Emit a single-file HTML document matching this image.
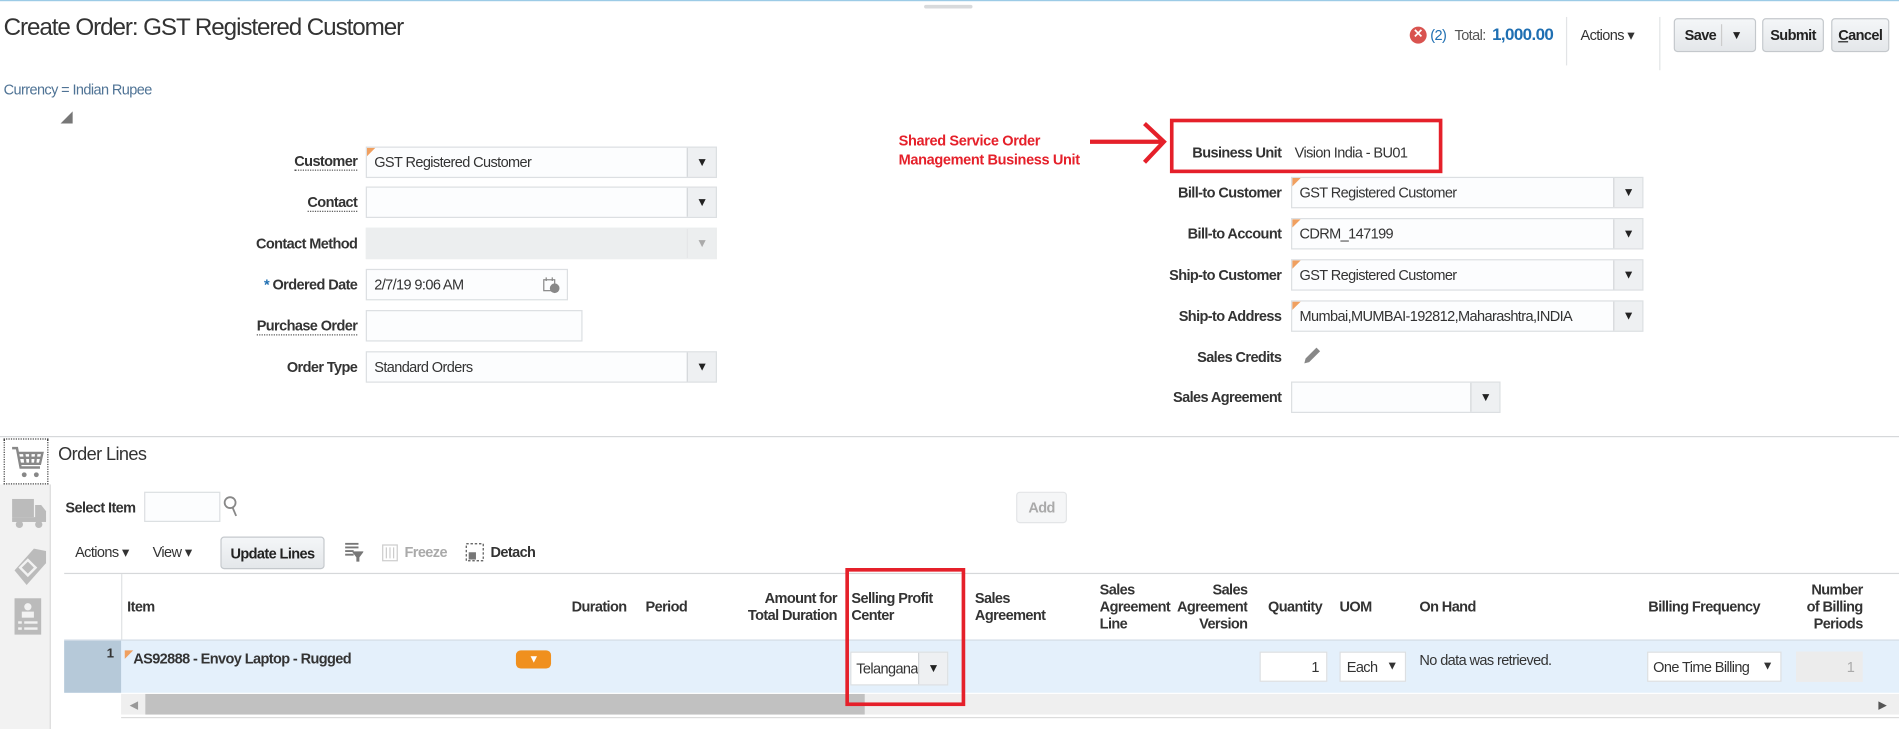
<!DOCTYPE html>
<html><head><meta charset="utf-8"><style>
*{box-sizing:border-box;margin:0;padding:0}
body{width:1899px;height:729px;overflow:hidden;background:#fff;font-family:"Liberation Sans",Arial,sans-serif;color:#333}
#w{position:absolute;left:0;top:0;width:1568px;height:602px;transform:scale(1.2111);transform-origin:0 0;letter-spacing:-0.5px}
.a{position:absolute;white-space:nowrap}
.lbl{position:absolute;font-size:12px;font-weight:bold;color:#333;text-align:right;white-space:nowrap}
.inp{position:absolute;border:1px solid #dcdfe2;background:#fcfdfe;font-size:12px;color:#333;padding:0 6px;display:flex;align-items:center;white-space:nowrap;overflow:hidden}
.dd{position:absolute;top:-1px;right:-1px;bottom:-1px;width:25px;background:#eef0f2;border:1px solid #d4d7da;display:flex;align-items:center;justify-content:center;font-size:10px;color:#222}
.mark{position:absolute;left:0;top:0;width:0;height:0;border-top:7px solid #f0a060;border-right:7px solid transparent}
.btn{position:absolute;border:1px solid #c4c8cc;border-radius:3px;background:linear-gradient(#f4f6f8,#e4e7ea);font-size:12px;font-weight:bold;display:flex;align-items:center;justify-content:center;color:#222}
.th{position:absolute;font-size:12px;font-weight:bold;color:#333;line-height:14px;white-space:nowrap}
.ul{border-bottom:1px dotted #555}
</style></head><body><div id="w">
<div class="a" style="left:0;top:0;width:1568px;height:1px;background:#9ccbe6"></div>
<div class="a" style="left:763px;top:4px;width:40px;height:3px;background:#d8dadc;border-radius:2px"></div>
<div class="a" style="left:3px;top:12px;font-size:20px;color:#333;letter-spacing:-0.9px">Create Order: GST Registered Customer</div>

<div class="a" style="left:1164px;top:22px;width:14px;height:14px;border-radius:7px;background:#d9534f;color:#fff;font-size:10px;font-weight:bold;text-align:center;line-height:14px;letter-spacing:0">✕</div>
<div class="a" style="left:1181px;top:22px;font-size:12px;color:#1f6fb2">(2)</div>
<div class="a" style="left:1201px;top:22px;font-size:12px;color:#555">Total:</div>
<div class="a" style="left:1232px;top:20px;font-size:14px;font-weight:bold;color:#1f6fb2">1,000.00</div>
<div class="a" style="left:1293px;top:14px;width:1px;height:40px;background:#e2e4e6"></div>
<div class="a" style="left:1305px;top:22px;font-size:12px;color:#333">Actions ▾</div>
<div class="a" style="left:1370px;top:14px;width:1px;height:44px;background:#e2e4e6"></div>
<div class="btn" style="left:1382px;top:15px;width:68px;height:28px;justify-content:flex-start;padding-left:8px">Save<span style="position:absolute;left:38px;top:4px;bottom:4px;width:1px;background:#ccc"></span><span style="position:absolute;left:46px;font-size:10px">▼</span></div>
<div class="btn" style="left:1455px;top:15px;width:51px;height:28px">Submit</div>
<div class="btn" style="left:1512px;top:15px;width:48px;height:28px"><u>C</u>ancel</div>

<div class="a" style="left:3px;top:67px;font-size:12px;color:#4f7395">Currency = Indian Rupee</div>
<div class="a" style="left:50px;top:92px;width:0;height:0;border-bottom:10px solid #777;border-left:10px solid transparent"></div>

<div class="lbl" style="right:1273px;top:126px"><span class="ul">Customer</span></div>
<div class="inp" style="left:302px;top:121px;width:290px;height:26px"><div class="mark"></div>GST Registered Customer<div class="dd">▼</div></div>
<div class="lbl" style="right:1273px;top:160px"><span class="ul">Contact</span></div>
<div class="inp" style="left:302px;top:154px;width:290px;height:26px"><div class="dd">▼</div></div>
<div class="lbl" style="right:1273px;top:194px">Contact Method</div>
<div class="inp" style="left:302px;top:188px;width:290px;height:26px;background:#eceeef;border-color:#eceeef"><div class="dd" style="background:#eceeef;border-color:#e4e6e8;color:#aaa">▼</div></div>
<div class="lbl" style="right:1273px;top:228px"><span style="color:#1f6fb2">*</span> Ordered Date</div>
<div class="inp" style="left:302px;top:222px;width:167px;height:26px">2/7/19 9:06 AM<svg style="position:absolute;right:6px;top:5px" width="14" height="15"><rect x="1" y="3" width="9" height="9" fill="none" stroke="#888"/><path d="M3 1V4M8 1V4" stroke="#888"/><circle cx="10" cy="10" r="4" fill="#888"/></svg></div>
<div class="lbl" style="right:1273px;top:262px"><span class="ul">Purchase Order</span></div>
<div class="inp" style="left:302px;top:256px;width:179px;height:26px"></div>
<div class="lbl" style="right:1273px;top:296px">Order Type</div>
<div class="inp" style="left:302px;top:290px;width:290px;height:26px">Standard Orders<div class="dd">▼</div></div>

<div class="a" style="left:742px;top:108px;font-size:12px;font-weight:bold;color:#e5202a;line-height:16px;letter-spacing:-0.3px">Shared Service Order<br>Management Business Unit</div>
<svg class="a" style="left:895px;top:100px" width="72" height="38"><path d="M5 17 L66 17 M50 2 L66 17 L50 34" stroke="#e5202a" stroke-width="3.5" fill="none"/></svg>
<div class="a" style="left:966px;top:98px;width:225px;height:45px;border:3px solid #e5202a"></div>

<div class="lbl" style="right:510px;top:119px">Business Unit</div>
<div class="a" style="left:1069px;top:119px;font-size:12px">Vision India - BU01</div>
<div class="lbl" style="right:510px;top:152px">Bill-to Customer</div>
<div class="inp" style="left:1066px;top:146px;width:291px;height:26px"><div class="mark"></div>GST Registered Customer<div class="dd">▼</div></div>
<div class="lbl" style="right:510px;top:186px">Bill-to Account</div>
<div class="inp" style="left:1066px;top:180px;width:291px;height:26px"><div class="mark"></div>CDRM_147199<div class="dd">▼</div></div>
<div class="lbl" style="right:510px;top:220px">Ship-to Customer</div>
<div class="inp" style="left:1066px;top:214px;width:291px;height:26px"><div class="mark"></div>GST Registered Customer<div class="dd">▼</div></div>
<div class="lbl" style="right:510px;top:254px">Ship-to Address</div>
<div class="inp" style="left:1066px;top:248px;width:291px;height:26px"><div class="mark"></div>Mumbai,MUMBAI-192812,Maharashtra,INDIA<div class="dd">▼</div></div>
<div class="lbl" style="right:510px;top:288px">Sales Credits</div>
<svg class="a" style="left:1074px;top:285px" width="18" height="18"><path d="M3 15 L4 11 L13 2 L16 5 L7 14 Z" fill="#888"/></svg>
<div class="lbl" style="right:510px;top:321px">Sales Agreement</div>
<div class="inp" style="left:1066px;top:315px;width:173px;height:26px"><div class="dd">▼</div></div>

<div class="a" style="left:0;top:360px;width:1568px;height:1px;background:#d6d8da"></div>
<div class="a" style="left:0;top:400px;width:42px;height:202px;background:#f2f2f2;border-right:1px solid #dcdcdc"></div>
<div class="a" style="left:3px;top:362px;width:37px;height:38px;border:1px dotted #444;background:#fff"></div>
<svg class="a" style="left:9px;top:367px" width="28" height="30"><path d="M1 3 L5 3 L8 19 L24 19 M6 7 L26 7 L24 16 L8 16 M11 7 L12 16 M16 7 L16 16 M21 7 L20 16 M7 11 L25 11" stroke="#888" stroke-width="2" fill="none"/><circle cx="11" cy="25" r="2" fill="#888"/><circle cx="21" cy="25" r="2" fill="#888"/></svg>
<svg class="a" style="left:9px;top:410px" width="30" height="28"><rect x="1" y="2" width="18" height="15" fill="#bbb"/><path d="M20 7 L25 7 L29 12 L29 20 L20 20 Z" fill="#bbb"/><rect x="1" y="17" width="28" height="4" fill="#bbb"/><circle cx="7" cy="23" r="3" fill="#bbb"/><circle cx="23" cy="23" r="3" fill="#bbb"/></svg>
<svg class="a" style="left:8px;top:449px" width="32" height="36"><path d="M4 22 L20 4 L30 6 L30 16 L14 34 Z" fill="#bbb"/><rect x="11" y="15" width="9" height="9" transform="rotate(45 15 19)" fill="none" stroke="#f2f2f2" stroke-width="2"/></svg>
<svg class="a" style="left:11px;top:493px" width="24" height="32"><rect x="1" y="1" width="22" height="30" fill="#bbb"/><circle cx="12" cy="8" r="3" fill="#f2f2f2"/><rect x="7" y="12" width="10" height="5" fill="#f2f2f2"/><rect x="4" y="20" width="3" height="2" fill="#f2f2f2"/><rect x="9" y="20" width="11" height="2" fill="#f2f2f2"/><rect x="4" y="25" width="3" height="2" fill="#f2f2f2"/><rect x="9" y="25" width="11" height="2" fill="#f2f2f2"/></svg>

<div class="a" style="left:48px;top:367px;font-size:15px;color:#333">Order Lines</div>
<div class="lbl" style="left:54px;top:412px">Select Item</div>
<div class="inp" style="left:119px;top:406px;width:63px;height:25px"></div>
<svg class="a" style="left:184px;top:409px" width="14" height="20"><circle cx="6" cy="6" r="4.5" stroke="#888" stroke-width="1.5" fill="none"/><path d="M8 10 L11 17" stroke="#888" stroke-width="1.5"/></svg>
<div class="btn" style="left:839px;top:406px;width:42px;height:26px;color:#aaa;background:#f5f6f7;border-color:#e3e5e7">Add</div>

<div class="a" style="left:62px;top:449px;font-size:12px">Actions ▾</div>
<div class="a" style="left:126px;top:449px;font-size:12px">View ▾</div>
<div class="btn" style="left:182px;top:443px;width:86px;height:27px">Update Lines</div>
<svg class="a" style="left:284px;top:448px" width="16" height="16"><path d="M1 1 H12 M1 4 H12 M1 7 H8 M1 10 H8 M8 8 L15 8 L12 12 L12 15 L11 15 L11 12 Z" stroke="#777" stroke-width="1.5" fill="#777"/></svg>
<svg class="a" style="left:315px;top:449px" width="14" height="15"><rect x="1" y="1" width="12" height="13" fill="none" stroke="#ccc"/><path d="M4 3V12M7 3V12M10 3V12" stroke="#ccc"/></svg>
<div class="a" style="left:334px;top:449px;font-size:12px;font-weight:bold;color:#aaa">Freeze</div>
<svg class="a" style="left:384px;top:448px" width="16" height="16"><rect x="1" y="1" width="14" height="14" fill="none" stroke="#555" stroke-dasharray="2 1.5"/><rect x="3" y="8" width="6" height="6" fill="#777"/></svg>
<div class="a" style="left:405px;top:449px;font-size:12px;font-weight:bold">Detach</div>

<div class="a" style="left:53px;top:473px;width:1515px;height:1px;background:#d6d8da"></div>
<div class="a" style="left:100px;top:474px;width:1px;height:54px;background:#e0e2e4"></div>
<div class="th" style="left:105px;top:494px">Item</div>
<div class="th" style="left:472px;top:494px">Duration</div>
<div class="th" style="left:533px;top:494px">Period</div>
<div class="th" style="left:600px;top:487px;width:91px;text-align:right">Amount for<br>Total Duration</div>
<div class="th" style="left:703px;top:487px">Selling Profit<br>Center</div>
<div class="th" style="left:805px;top:487px">Sales<br>Agreement</div>
<div class="th" style="left:908px;top:480px;width:62px;overflow:hidden">Sales<br>Agreement<br>Line</div>
<div class="th" style="left:970px;top:480px;width:60px;text-align:right;overflow:hidden">Sales<br>Agreement<br>Version</div>
<div class="th" style="left:1047px;top:494px">Quantity</div>
<div class="th" style="left:1106px;top:494px">UOM</div>
<div class="th" style="left:1172px;top:494px">On Hand</div>
<div class="th" style="left:1361px;top:494px">Billing Frequency</div>
<div class="th" style="left:1470px;top:480px;width:68px;text-align:right">Number<br>of Billing<br>Periods</div>

<div class="a" style="left:53px;top:528px;width:1515px;height:44px;background:#e4f0fb;border-top:1px solid #d4dde6"></div>
<div class="a" style="left:53px;top:529px;width:47px;height:43px;background:#b6c9d9"></div>
<div class="a" style="left:88px;top:534px;font-size:11px;font-weight:bold">1</div>
<div class="a" style="left:103px;top:537px;width:0;height:0;border-top:7px solid #f0a060;border-right:7px solid transparent"></div>
<div class="a" style="left:110px;top:537px;font-size:12px;font-weight:bold">AS92888 - Envoy Laptop - Rugged</div>
<div class="a" style="left:426px;top:537px;width:29px;height:15px;background:#f0901e;border-radius:4px;color:#fff;font-size:9px;text-align:center;line-height:15px">▼</div>
<div class="inp" style="left:702px;top:538px;width:81px;height:28px;padding:0 4px;background:#fff">Telangana<div class="dd">▼</div></div>
<div class="inp" style="left:1040px;top:538px;width:56px;height:25px;justify-content:flex-end;background:#fff">1</div>
<div class="inp" style="left:1106px;top:538px;width:55px;height:25px;background:#fff;padding:0 5px">Each <span style="position:absolute;right:6px;font-size:10px">▼</span></div>
<div class="a" style="left:1172px;top:538px;font-size:12px">No data was retrieved.</div>
<div class="inp" style="left:1360px;top:538px;width:111px;height:25px;background:#fff;padding:0 4px">One Time Billing <span style="position:absolute;right:6px;font-size:10px">▼</span></div>
<div class="inp" style="left:1483px;top:538px;width:55px;height:25px;justify-content:flex-end;background:#ececec;border-color:#ececec;color:#aaa">1</div>

<div class="a" style="left:100px;top:573px;width:1468px;height:17px;background:#efefef"></div>
<div class="a" style="left:120px;top:573px;width:594px;height:17px;background:#c1c1c1"></div>
<div class="a" style="left:107px;top:577px;font-size:9px;color:#999">◀</div>
<div class="a" style="left:1551px;top:577px;font-size:9px;color:#555">▶</div>
<div class="a" style="left:100px;top:592px;width:1468px;height:1px;background:#dcdcdc"></div>

<div class="a" style="left:698px;top:469px;width:99px;height:114px;border:3px solid #e5202a"></div>
</div></body></html>
